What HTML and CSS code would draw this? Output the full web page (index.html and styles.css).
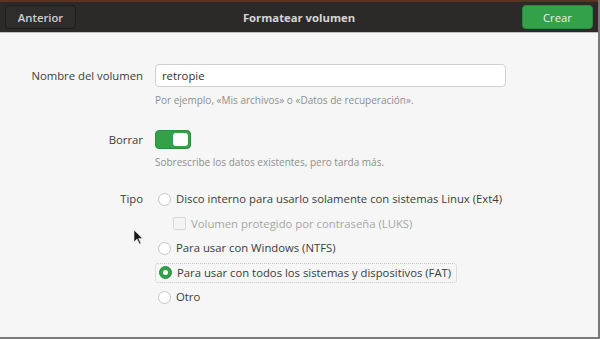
FILE: index.html
```html
<!DOCTYPE html>
<html lang="es">
<head>
    <meta charset="UTF-8">
    <title>Formatear volumen</title>
    <link rel="stylesheet" href="styles.css">
</head>
<body>
    <div class="window">
        <header class="headerbar">
            <button class="btn btn-back">Anterior</button>
            <h1 class="title">Formatear volumen</h1>
            <button class="btn btn-create">Crear</button>
        </header>
        <main class="content">
            <div class="form">
                <label class="label label-name" for="name">Nombre del volumen</label>
                <div class="field">
                    <input id="name" class="entry" type="text" value="retropie">
                    <p class="hint">Por ejemplo, «Mis archivos» o «Datos de recuperación».</p>
                </div>

                <span class="label label-erase">Borrar</span>
                <div class="field">
                    <span class="switch"><span class="knob"></span></span>
                    <p class="hint">Sobrescribe los datos existentes, pero tarda más.</p>
                </div>

                <span class="label label-type">Tipo</span>
                <div class="field options">
                    <div class="option"><span class="radio"></span>Disco interno para usarlo solamente con sistemas Linux (Ext4)</div>
                    <div class="option sub disabled"><span class="check"></span>Volumen protegido por contraseña (LUKS)</div>
                    <div class="option"><span class="radio"></span>Para usar con Windows (NTFS)</div>
                    <div class="option focused"><span class="radio checked"></span>Para usar con todos los sistemas y dispositivos (FAT)</div>
                    <div class="option"><span class="radio"></span>Otro</div>
                </div>
            </div>
            <svg class="cursor" width="10" height="16" viewBox="0 0 10 16">
                <path d="M1 1 L1 13 L4 10 L6.5 15 L8 14.3 L5.6 9.4 L9.5 9.4 Z" fill="#1a1a1a" stroke="#e8e8e8" stroke-width="0.6"/>
            </svg>
        </main>
    </div>
</body>
</html>
```

FILE: styles.css
```css
* {
    margin: 0;
    padding: 0;
    box-sizing: border-box
}

:root {
    --header-bg: #2c2a29;
    --content-bg: #f5f6f5;
    --text: #3c3c3c;
    --hint: #8d8f8d;
    --green: #33a14a;
    --border: #cfd1cf
}

body {
    width: 600px;
    height: 339px;
    overflow: hidden;
    background: #7a7a7a;
    font-family: "Open Sans", "Noto Sans", sans-serif;
    font-size: 11.3px;
    color: var(--text)
}

.window {
    width: 598px;
    height: 337px;
    display: flex;
    flex-direction: column;
    background: var(--content-bg)
}

.headerbar {
    height: 33px;
    display: grid;
    grid-template-columns: 1fr auto 1fr;
    align-items: center;
    padding: 0 5px;
    background: var(--header-bg);
    border-top: 2px solid #5e3220;
    border-bottom: 1px solid #bdbdbd
}

.title {
    font-size: 11.3px;
    font-weight: 700;
    color: #d6d6d6
}

.btn {
    height: 24px;
    width: 71px;
    border-radius: 4px;
    font: inherit;
    font-weight: 600;
    font-size: 11.3px
}

.btn-back {
    justify-self: start;
    background: #2f2d2c;
    border: 1px solid #1f1e1d;
    color: #cfcfcf
}

.btn-create {
    justify-self: end;
    background: var(--green);
    border: 1px solid #2a8a3e;
    color: #e4f3e7;
    font-weight: 500
}

.content {
    position: relative;
    flex: 1
}

.form {
    display: grid;
    grid-template-columns: 143px 1fr;
    column-gap: 12px;
    padding-top: 31px
}

.label {
    text-align: right;
    line-height: 23px
}

.label-erase {
    margin-top: 23px;
    line-height: 19px
}

.label-type {
    margin-top: 23px;
    line-height: 14px
}

.field {
    display: flex;
    flex-direction: column;
    align-items: flex-start
}

.entry {
    width: 351px;
    height: 23px;
    padding: 0 6px;
    border: 1px solid var(--border);
    border-radius: 4px;
    background: #fff;
    font: inherit;
    color: #303030;
    outline: none
}

.hint {
    margin-top: 6px;
    font-size: 10px;
    color: var(--hint)
}

.switch {
    margin-top: 23px;
    width: 36px;
    height: 19px;
    border-radius: 4px;
    background: var(--green);
    border: 1px solid #2c8c40;
    display: flex;
    justify-content: flex-end;
    padding: 2px
}

.knob {
    width: 15px;
    height: 13px;
    border-radius: 3px;
    background: #fff
}

.options {
    margin-top: 23px;
    row-gap: 10.5px
}

.option {
    display: flex;
    align-items: center;
    gap: 5px;
    line-height: 14px;
    margin-left: 3px
}

.option.sub {
    margin-left: 18px
}

.option.disabled {
    color: #a5a7a5
}

.option.focused {
    padding: 2px 5px 2px 3px;
    margin: -3px 0;
    border: 1px dotted #c4c6c4;
    border-radius: 3px
}

.radio {
    width: 13px;
    height: 13px;
    border-radius: 50%;
    background: #fff;
    border: 1px solid #c5c7c5;
    flex-shrink: 0
}

.radio.checked {
    background: var(--green);
    border-color: #2c8c40;
    display: flex;
    align-items: center;
    justify-content: center
}

.radio.checked::after {
    content: "";
    width: 5px;
    height: 5px;
    border-radius: 50%;
    background: #fff
}

.check {
    width: 13px;
    height: 13px;
    border-radius: 2px;
    border: 1px solid #d6d8d6;
    background: #f3f4f3;
    flex-shrink: 0
}

.cursor {
    position: absolute;
    left: 133px;
    top: 196px
}
```
